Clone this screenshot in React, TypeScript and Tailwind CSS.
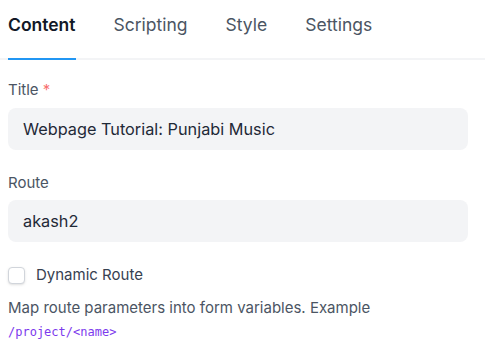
const tabs = ['Content', 'Scripting', 'Style', 'Settings']

export default function App() {
    return (
        <div className="w-[485px] h-[349px] bg-white overflow-hidden font-['Inter',sans-serif]">
            <div className="flex gap-[38px] pl-2 border-b-2 border-[#f3f4f6] h-[60px] items-stretch">
                {tabs.map((t, i) => (
                    <div
                        key={t}
                        className={
                            i === 0
                                ? 'flex items-center text-[17.5px] font-semibold text-[#111827] border-b-2 border-[#2196f3] -mb-[2px] pb-[7px]'
                                : 'flex items-center text-[17.5px] text-[#4b5563] pb-[7px]'
                        }
                    >
                        {t}
                    </div>
                ))}
            </div>

            <div className="pl-2 pr-[17px] pt-[19px]">
                <div className="text-[15px] text-[#4b5563] leading-[22px]">
                    Title <span className="text-[#f87171]">*</span>
                </div>
                <div className="mt-[7px] h-[42px] rounded-lg bg-[#f3f4f6] flex items-center px-[15px] text-[16.3px] text-[#1f2937]">
                    Webpage Tutorial: Punjabi Music
                </div>

                <div className="mt-[22px] text-[15px] text-[#4b5563] leading-[22px]">Route</div>
                <div className="mt-[6px] h-[42px] rounded-lg bg-[#f3f4f6] flex items-center px-[15px] text-[16.3px] text-[#1f2937]">
                    akash2
                </div>

                <label className="mt-[22px] flex items-center gap-[11px]">
                    <span className="w-[17px] h-[17px] rounded-[4px] border border-[#d1d5db] bg-white shadow-sm" />
                    <span className="text-[15px] text-[#374151]">Dynamic Route</span>
                </label>

                <p className="mt-[10px] text-[15px] text-[#4b5563] leading-[22px]">
                    Map route parameters into form variables. Example
                </p>
                <code className="block mt-[4px] text-[12px] text-[#7c3aed] font-['DejaVu_Sans_Mono',monospace]">
                    /project/&lt;name&gt;
                </code>
            </div>
        </div>
    )
}
